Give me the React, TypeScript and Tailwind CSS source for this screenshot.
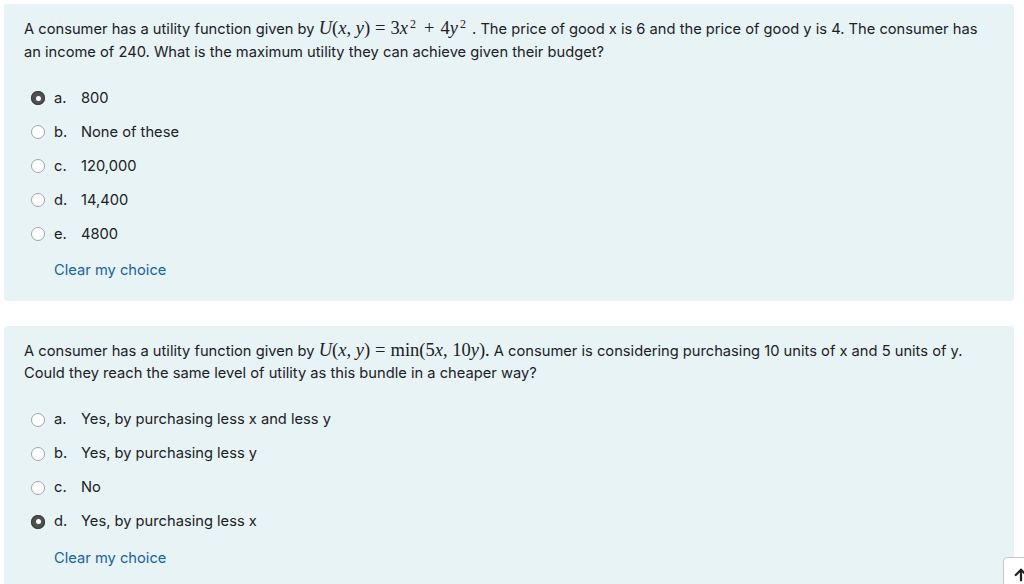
import React from 'react';
import { ArrowUp } from 'lucide-react';

type Option = { letter: string; text: string; checked?: boolean };

const Radio: React.FC<{ checked?: boolean }> = ({ checked }) =>
  checked ? (
    <span className="block w-[14px] h-[14px] rounded-full bg-[#505050] flex items-center justify-center shrink-0 shadow-[inset_0_0_0_1px_#3a3a3a]">
      <span className="block w-[5px] h-[5px] rounded-full bg-white" />
    </span>
  ) : (
    <span className="block w-[14px] h-[14px] rounded-full bg-white border border-[#a3a3a3] shrink-0" />
  );

const Tex: React.FC<{ children: React.ReactNode }> = ({ children }) => (
  <span className="font-['Liberation_Serif',serif] text-[18.5px] leading-none">{children}</span>
);

const V: React.FC<{ children: React.ReactNode }> = ({ children }) => <i>{children}</i>;
const Op: React.FC<{ children: React.ReactNode; wide?: boolean }> = ({ children, wide }) => (
  <span className={wide ? 'mx-[6px]' : 'mx-[5px]'}>{children}</span>
);
const Sq = () => <sup className="text-[12px] leading-none ml-[2px] mr-[2px]">2</sup>;

const Question: React.FC<{ prompt: React.ReactNode; options: Option[] }> = ({ prompt, options }) => (
  <div className="bg-[#e7f3f5] rounded-[4px] pt-[14px] pb-[19px] px-[20px]">
    <div className="leading-[22.5px]">{prompt}</div>
    <div className="mt-[18px]">
      {options.map((o) => (
        <div key={o.letter} className="h-[34px] flex items-center">
          <span className="ml-[7px]">
            <Radio checked={o.checked} />
          </span>
          <span className="ml-[9px] w-[27px]">{o.letter}.</span>
          <span>{o.text}</span>
        </div>
      ))}
    </div>
    <div className="mt-[8px] ml-[30px] leading-[22.5px] text-[#1a62a0]">Clear my choice</div>
  </div>
);

export default function App() {
  return (
    <div className="relative w-[1024px] h-[584px] overflow-hidden bg-white pt-[4px] pl-[4px] pr-[10px] text-[14.7px] text-[#1d2125] font-['Inter','Liberation_Sans',sans-serif]">
      <Question
        prompt={
          <>
            A consumer has a utility function given by{' '}
            <Tex>
              <V>U</V>(<V>x</V>, <V>y</V>)<Op>=</Op>3<V>x</V>
              <Sq />
              <Op wide>+</Op>4<V>y</V>
              <Sq />
            </Tex>{' '}
            . The price of good x is 6 and the price of good y is 4. The consumer has an income of 240. What is
            the maximum utility they can achieve given their budget?
          </>
        }
        options={[
          { letter: 'a', text: '800', checked: true },
          { letter: 'b', text: 'None of these' },
          { letter: 'c', text: '120,000' },
          { letter: 'd', text: '14,400' },
          { letter: 'e', text: '4800' },
        ]}
      />
      <div className="h-[25px]" />
      <Question
        prompt={
          <>
            A consumer has a utility function given by{' '}
            <Tex>
              <V>U</V>(<V>x</V>, <V>y</V>)<Op>=</Op>min(5<V>x</V>, 10<V>y</V>).
            </Tex>{' '}
            A consumer is considering purchasing 10 units of x and 5 units of y. Could they reach the same level
            of utility as this bundle in a cheaper way?
          </>
        }
        options={[
          { letter: 'a', text: 'Yes, by purchasing less x and less y' },
          { letter: 'b', text: 'Yes, by purchasing less y' },
          { letter: 'c', text: 'No' },
          { letter: 'd', text: 'Yes, by purchasing less x', checked: true },
        ]}
      />
      <div className="absolute left-[1003px] top-[557px] w-[40px] h-[40px] bg-white border border-[#c8c8c8] rounded-[4px] flex items-start justify-center pt-[8px]">
        <ArrowUp size={18} strokeWidth={3} className="text-[#1d2125] -ml-[4px]" />
      </div>
    </div>
  );
}
